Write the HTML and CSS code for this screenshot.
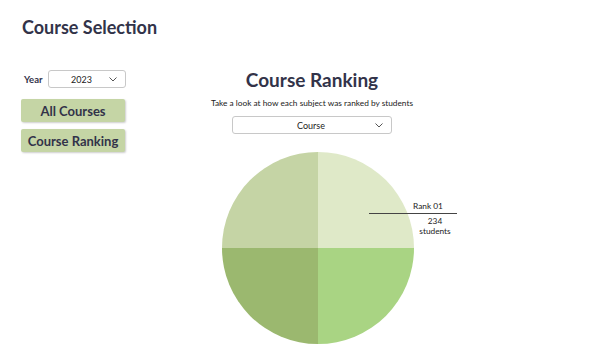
FILE: index.html
```html
<!DOCTYPE html>
<html>
<head>
<meta charset="utf-8">
<link rel="stylesheet" href="styles.css">
</head>
<body>
<h1 class="page-title">Course Selection</h1>
<div class="layout">
  <aside class="sidebar">
    <div class="year-row">
      <span class="year-label">Year</span>
      <div class="select year-select"><span class="select-value">2023</span><svg class="chev" width="8" height="5" viewBox="0 0 8 5"><path d="M0.5 0.5 L4 4 L7.5 0.5" fill="none" stroke="#555" stroke-width="1"/></svg></div>
    </div>
    <button class="nav-btn">All Courses</button>
    <button class="nav-btn">Course Ranking</button>
  </aside>
  <main class="main">
    <h2 class="section-title">Course Ranking</h2>
    <p class="subtitle">Take a look at how each subject was ranked by students</p>
    <div class="select course-select"><span class="select-value">Course</span><svg class="chev" width="8" height="5" viewBox="0 0 8 5"><path d="M0.5 0.5 L4 4 L7.5 0.5" fill="none" stroke="#555" stroke-width="1"/></svg></div>
    <div class="chart">
      <svg width="250" height="196" viewBox="0 0 250 196">
        <g transform="translate(96,96)">
          <path d="M0 0 L0 -96 A96 96 0 0 1 96 0 Z" fill="#dfe9c8"/>
          <path d="M0 0 L96 0 A96 96 0 0 1 0 96 Z" fill="#a9d483"/>
          <path d="M0 0 L0 96 A96 96 0 0 1 -96 0 Z" fill="#9bb86f"/>
          <path d="M0 0 L-96 0 A96 96 0 0 1 0 -96 Z" fill="#c5d4a5"/>
        </g>
        <line x1="147" y1="61.5" x2="235" y2="61.5" stroke="#444" stroke-width="1"/>
        <text class="lbl" x="206" y="57" text-anchor="middle">Rank 01</text>
        <text class="lbl" x="213" y="72" text-anchor="middle">234</text>
        <text class="lbl" x="213" y="82" text-anchor="middle">students</text>
      </svg>
    </div>
  </main>
</div>
</body>
</html>
```
FILE: styles.css
```css
* { box-sizing: border-box; }
body {
  margin: 0;
  background: #ffffff;
  font-family: Lato, "Noto Sans", sans-serif;
  color: #323349;
  width: 611px;
  height: 361px;
  overflow: hidden;
}
.page-title {
  margin: 0;
  padding: 16px 0 0 22px;
  font-size: 18px;
  line-height: 22px;
  font-weight: 700;
}
.layout {
  display: flex;
  padding-top: 31px;
}
.sidebar {
  width: 130px;
  padding-left: 21px;
  padding-top: 1px;
  display: flex;
  flex-direction: column;
  align-items: flex-start;
}
.year-row {
  display: flex;
  align-items: center;
  padding-left: 3px;
  gap: 5px;
  margin-bottom: 11px;
}
.year-label {
  font-size: 9.5px;
  font-weight: 700;
}
.select {
  display: flex;
  align-items: center;
  justify-content: center;
  position: relative;
  border: 1px solid #c8c8c8;
  border-radius: 3px;
  background: #fff;
  height: 18px;
  font-size: 9px;
  color: #222;
}
.select .chev {
  position: absolute;
  right: 8px;
  top: 6px;
}
.year-select {
  width: 78px;
  padding-right: 10px;
}
.nav-btn {
  font-family: Lato, "Noto Sans", sans-serif;
  font-weight: 700;
  font-size: 13px;
  color: #323349;
  background: #c5d5a5;
  border: none;
  border-radius: 2px;
  height: 23px;
  width: 104px;
  padding: 0;
  margin-bottom: 7px;
  box-shadow: 1px 1px 2px rgba(0,0,0,0.2);
}
.main {
  width: 364px;
  display: flex;
  flex-direction: column;
  align-items: center;
}
.section-title {
  margin: 0;
  font-size: 19px;
  line-height: 22px;
  font-weight: 700;
}
.subtitle {
  margin: 7px 0 0;
  font-size: 8.3px;
  line-height: 10px;
  color: #222;
}
.course-select {
  margin-top: 8px;
  width: 160px;
  padding-right: 2px;
}
.chart {
  align-self: flex-start;
  margin: 18px 0 0 92px;
}
.lbl {
  font-family: Lato, "Noto Sans", sans-serif;
  font-size: 8.3px;
  fill: #222;
}
```
